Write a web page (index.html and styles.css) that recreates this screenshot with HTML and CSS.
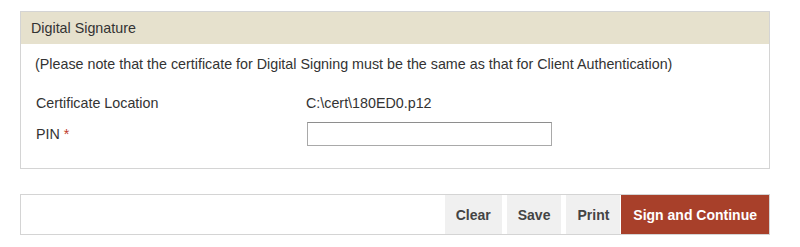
FILE: index.html
```html
<!DOCTYPE html>
<html lang="en">
<head>
    <meta charset="UTF-8">
    <meta name="viewport" content="width=device-width, initial-scale=1.0">
    <title>Digital Signature</title>
    <link rel="stylesheet" href="styles.css">
</head>
<body>
    <div class="panel">
        <div class="panel-header">Digital Signature</div>
        <div class="panel-body">
            <p class="note">(Please note that the certificate for Digital Signing must be the same as that for Client Authentication)</p>
            <div class="form-row cert-row">
                <label class="form-label">Certificate Location</label>
                <div class="form-value">C:\cert\180ED0.p12</div>
            </div>
            <div class="form-row pin-row">
                <label class="form-label" for="pin">PIN <span class="required">*</span></label>
                <div class="form-value"><input type="password" id="pin" class="pin-input"></div>
            </div>
        </div>
    </div>

    <div class="button-bar">
        <button class="btn">Clear</button>
        <button class="btn">Save</button>
        <button class="btn">Print</button>
        <button class="btn btn-primary">Sign and Continue</button>
    </div>
</body>
</html>
```

FILE: styles.css
```css
body {
    margin: 0;
    padding: 11px 0 0 20px;
    font-family: 'Liberation Sans', Arial, sans-serif;
    font-size: 14.3px;
    color: #333;
    background: #fff;
}
.panel {
    width: 748px;
    border: 1px solid #d4d4d4;
}
.panel-header {
    height: 32px;
    line-height: 32px;
    padding-left: 10px;
    background: #e6e1cd;
    color: #333;
}
.panel-body {
    padding: 10px 14px 22px;
}
.note {
    margin: 0;
    line-height: 20px;
}
.form-row {
    display: grid;
    grid-template-columns: 271px 1fr;
    align-items: center;
}
.cert-row {
    margin-top: 19px;
    line-height: 20px;
}
.pin-row {
    margin-top: 9px;
}
.form-label {
    padding-left: 1px;
}
.required {
    color: #c0392b;
}
.pin-input {
    box-sizing: border-box;
    width: 245px;
    height: 24px;
    margin: 0 0 0 1px;
    border: 1px solid #a9a9a9;
    border-top-color: #8e8e8e;
    padding: 2px 4px;
    display: block;
}
.button-bar {
    width: 748px;
    height: 39px;
    margin-top: 25px;
    border: 1px solid #d4d4d4;
    display: flex;
    justify-content: flex-end;
    gap: 5px;
}
.btn {
    font-family: 'Liberation Sans', Arial, sans-serif;
    font-size: 14px;
    font-weight: bold;
    color: #444;
    background: #f0f0f0;
    border: none;
    padding: 0 11px;
    height: 39px;
    cursor: pointer;
}
.btn-primary {
    margin-left: -4px;
    padding: 0 12px;
    background: #a8402a;
    color: #fff;
}
```
